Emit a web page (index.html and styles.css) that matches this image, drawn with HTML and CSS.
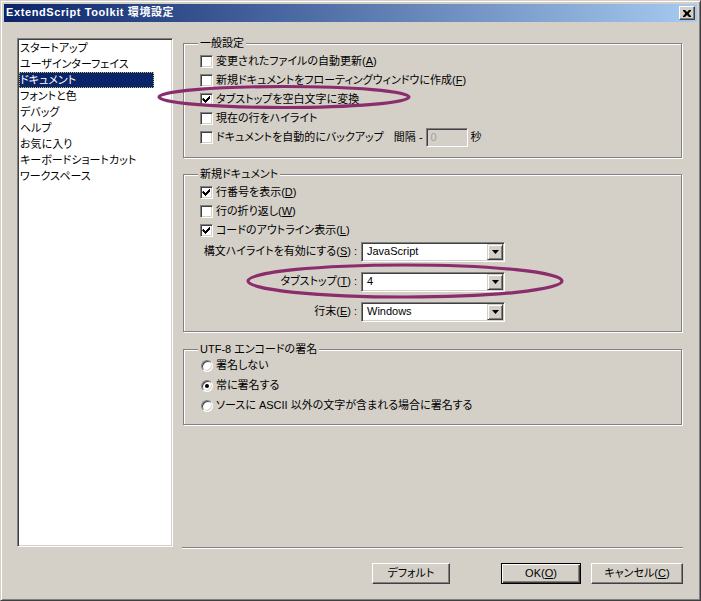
FILE: index.html
```html
<!DOCTYPE html>
<html lang="ja">
<head>
<meta charset="utf-8">
<title>ExtendScript Toolkit 環境設定</title>
<link rel="stylesheet" href="styles.css">
</head>
<body>
<div class="window">
  <div class="titlebar">
    <span class="title">ExtendScript Toolkit 環境設定</span>
    <span class="close"><svg width="8" height="7" viewBox="0 0 8 7"><path d="M0 0h2l2 2 2-2h2v1l-2 2v1l2 2v1h-2l-2-2-2 2h-2v-1l2-2v-1l-2-2z" fill="#000"/></svg></span>
  </div>
  <div class="content">
    <div class="main">
      <ul class="list">
        <li>スタートアップ</li>
        <li>ユーザインターフェイス</li>
        <li class="sel">ドキュメント</li>
        <li>フォントと色</li>
        <li>デバッグ</li>
        <li>ヘルプ</li>
        <li>お気に入り</li>
        <li>キーボードショートカット</li>
        <li>ワークスペース</li>
      </ul>
      <div class="panel">
        <div class="group g1">
          <span class="legend">一般設定</span>
          <div class="row"><span class="cb"></span><span>変更されたファイルの自動更新(<u>A</u>)</span></div>
          <div class="row"><span class="cb"></span><span>新規ドキュメントをフローティングウィンドウに作成(<u>F</u>)</span></div>
          <div class="row"><span class="cb on"><svg width="9" height="9" viewBox="0 0 9 9"><path d="M1 3h1v1h1v1h1v-1h1v-1h1v-1h1v-1h1v3h-1v1h-1v1h-1v1h-1v1h-1v-1h-1v-1h-1v-1h-1z" fill="#000"/></svg></span><span>タブストップを空白文字に変換</span></div>
          <div class="row"><span class="cb"></span><span>現在の行をハイライト</span></div>
          <div class="row"><span class="cb"></span><span>ドキュメントを自動的にバックアップ</span><span class="interval">間隔 -</span><span class="numbox">0</span><span class="unit">秒</span></div>
        </div>
        <div class="group g2">
          <span class="legend">新規ドキュメント</span>
          <div class="row"><span class="cb on"><svg width="9" height="9" viewBox="0 0 9 9"><path d="M1 3h1v1h1v1h1v-1h1v-1h1v-1h1v-1h1v3h-1v1h-1v1h-1v1h-1v1h-1v-1h-1v-1h-1v-1h-1z" fill="#000"/></svg></span><span>行番号を表示(<u>D</u>)</span></div>
          <div class="row"><span class="cb"></span><span>行の折り返し(<u>W</u>)</span></div>
          <div class="row"><span class="cb on"><svg width="9" height="9" viewBox="0 0 9 9"><path d="M1 3h1v1h1v1h1v-1h1v-1h1v-1h1v-1h1v3h-1v1h-1v1h-1v1h-1v1h-1v-1h-1v-1h-1v-1h-1z" fill="#000"/></svg></span><span>コードのアウトライン表示(<u>L</u>)</span></div>
          <div class="combos">
            <span class="clabel">構文ハイライトを有効にする(<u>S</u>) :</span>
            <span class="combo"><span class="cval">JavaScript</span><span class="dd"><svg width="7" height="4" viewBox="0 0 7 4"><path d="M0 0h7l-3.5 4z" fill="#000"/></svg></span></span>
            <span class="clabel">タブストップ(<u>T</u>) :</span>
            <span class="combo"><span class="cval">4</span><span class="dd"><svg width="7" height="4" viewBox="0 0 7 4"><path d="M0 0h7l-3.5 4z" fill="#000"/></svg></span></span>
            <span class="clabel">行末(<u>E</u>) :</span>
            <span class="combo"><span class="cval">Windows</span><span class="dd"><svg width="7" height="4" viewBox="0 0 7 4"><path d="M0 0h7l-3.5 4z" fill="#000"/></svg></span></span>
          </div>
        </div>
        <div class="group g3">
          <span class="legend">UTF-8 エンコードの署名</span>
          <div class="row r"><span class="rb"></span><span>署名しない</span></div>
          <div class="row r"><span class="rb on"></span><span>常に署名する</span></div>
          <div class="row r"><span class="rb"></span><span>ソースに ASCII 以外の文字が含まれる場合に署名する</span></div>
        </div>
        <div class="sep"></div>
      </div>
    </div>
    <div class="footer">
      <span class="btn b-default">デフォルト</span>
      <span class="btn b-ok">OK(<u>O</u>)</span>
      <span class="btn b-cancel">キャンセル(<u>C</u>)</span>
    </div>
  </div>
  <svg class="marks" width="701" height="601" viewBox="0 0 701 601">
    <ellipse cx="284" cy="97" rx="125" ry="10.5" fill="none" stroke="#8b2c6c" stroke-width="3.2"/>
    <ellipse cx="405" cy="281" rx="157" ry="16" fill="none" stroke="#8b2c6c" stroke-width="3.2"/>
  </svg>
</div>
</body>
</html>
```
FILE: styles.css
```css
* { box-sizing: border-box; }
html, body { margin: 0; padding: 0; }
body {
  background: #d4d0c8;
  font: 11px/1.2 "Liberation Sans", "Noto Sans CJK JP", sans-serif;
  font-feature-settings: "palt";
  color: #000;
}
u { text-decoration: underline; text-underline-offset: 1px; }

.window {
  position: relative;
  width: 701px;
  height: 601px;
  background: #d4d0c8;
  border: 1px solid;
  border-color: #d4d0c8 #404040 #404040 #d4d0c8;
  box-shadow: inset 1px 1px 0 #fff, inset -1px -1px 0 #808080;
  padding: 3px;
  display: flex;
  flex-direction: column;
}

.titlebar {
  height: 18px;
  display: flex;
  align-items: center;
  padding-left: 2px;
  background: linear-gradient(to right, #0a246a, #a6caf0);
  color: #fff;
  font-weight: bold;
  font-size: 11px;
}
.title { letter-spacing: 0.6px; white-space: nowrap; }
.close {
  margin-left: auto;
  margin-right: 2px;
  width: 16px;
  height: 14px;
  background: #d4d0c8;
  border: 1px solid;
  border-color: #fff #404040 #404040 #fff;
  box-shadow: inset -1px -1px 0 #808080;
  display: flex;
  align-items: center;
  justify-content: center;
}

.content {
  flex: 1;
  display: flex;
  flex-direction: column;
  padding: 16px 14px 0 13px;
}
.main {
  display: flex;
  gap: 10px;
  height: 511px;
}
.list {
  list-style: none;
  margin: 0;
  padding: 0;
  width: 156px;
  height: 509px;
  background: #fff;
  border: 1px solid;
  border-color: #808080 #fff #fff #808080;
  box-shadow: inset 1px 1px 0 #404040, inset -1px -1px 0 #d4d0c8;
  padding-top: 1px;
}
.list li {
  height: 16px;
  line-height: 16px;
  width: 135px;
  margin-left: 1px;
  padding-left: 1px;
  white-space: nowrap;
}
.list li.sel {
  background: #0a246a;
  color: #fff;
  outline: 1px dotted #c8c060;
  outline-offset: -1px;
}

.panel {
  width: 500px;
  display: flex;
  flex-direction: column;
}
.group {
  position: relative;
  width: 499px;
  border: 1px solid #808080;
  box-shadow: 1px 1px 0 #fff, inset 1px 1px 0 #fff;
}
.legend {
  position: absolute;
  top: -8px;
  left: 14px;
  padding: 0 2px;
  line-height: 14px;
  background: #d4d0c8;
  white-space: nowrap;
}
.g1 { margin-top: 5px; padding: 8px 0 10px 16px; }
.g2 { margin-top: 16px; padding: 8px 0 9px 16px; }
.g3 { margin-top: 17px; padding: 6px 0 8px 16px; }

.row {
  display: flex;
  align-items: center;
  height: 19px;
  white-space: nowrap;
}
.row.r { height: 20px; }
.cb {
  width: 13px;
  height: 13px;
  flex: none;
  margin-right: 3px;
  background: #fff;
  border: 1px solid;
  border-color: #808080 #fff #fff #808080;
  box-shadow: inset 1px 1px 0 #404040, inset -1px -1px 0 #d4d0c8;
  display: flex;
  align-items: center;
  justify-content: center;
}
.interval { margin-left: 10px; }
.numbox {
  margin-left: 3px;
  width: 42px;
  height: 19px;
  border: 1px solid;
  border-color: #808080 #fff #fff #808080;
  box-shadow: inset 1px 1px 0 #404040, inset -1px -1px 0 #d4d0c8;
  background: #d4d0c8;
  color: #a0a0a0;
  padding-left: 4px;
  line-height: 17px;
}
.unit { margin-left: 3px; }

.combos {
  display: grid;
  grid-template-columns: 160px 144px;
  column-gap: 4px;
  row-gap: 10px;
  margin-top: 2px;
  margin-left: -3px;
}
.clabel {
  display: flex;
  justify-content: flex-end;
  align-items: center;
  white-space: nowrap;
  height: 20px;
}
.combo {
  height: 20px;
  display: flex;
  align-items: center;
  background: #fff;
  border: 1px solid;
  border-color: #808080 #fff #fff #808080;
  box-shadow: inset 1px 1px 0 #404040, inset -1px -1px 0 #d4d0c8;
  padding: 1px;
}
.cval { padding-left: 4px; }
.dd {
  margin-left: auto;
  width: 16px;
  height: 16px;
  background: #d4d0c8;
  border: 1px solid;
  border-color: #d4d0c8 #404040 #404040 #d4d0c8;
  box-shadow: inset 1px 1px 0 #fff, inset -1px -1px 0 #808080;
  display: flex;
  align-items: center;
  justify-content: center;
}

.rb {
  position: relative;
  width: 12px;
  height: 12px;
  flex: none;
  margin-left: 1px;
  margin-right: 3px;
  border-radius: 50%;
  background: #fff;
  border: 1px solid;
  border-color: #808080 #fff #fff #808080;
  box-shadow: inset 1px 1px 0 #404040, inset -1px -1px 0 #d4d0c8;
}
.rb.on::after {
  content: "";
  position: absolute;
  left: 3px;
  top: 3px;
  width: 4px;
  height: 4px;
  border-radius: 50%;
  background: #000;
}

.sep {
  margin-top: auto;
  margin-left: -1px;
  width: 501px;
  height: 2px;
  border-top: 1px solid #808080;
  border-bottom: 1px solid #fff;
}

.footer {
  display: flex;
  justify-content: flex-end;
  margin-top: 14px;
}
.btn {
  height: 21px;
  display: flex;
  align-items: center;
  justify-content: center;
  background: #d4d0c8;
  border: 1px solid;
  border-color: #fff #404040 #404040 #fff;
  box-shadow: inset -1px -1px 0 #808080;
  white-space: nowrap;
}
.b-default { width: 78px; margin-right: 51px; }
.b-ok {
  width: 80px;
  margin-right: 10px;
  border-color: #000;
  box-shadow: inset 1px 1px 0 #fff, inset -1px -1px 0 #404040, inset -2px -2px 0 #808080;
}
.b-cancel { width: 92px; }

.marks {
  position: absolute;
  left: -1px;
  top: -1px;
  pointer-events: none;
}
```
